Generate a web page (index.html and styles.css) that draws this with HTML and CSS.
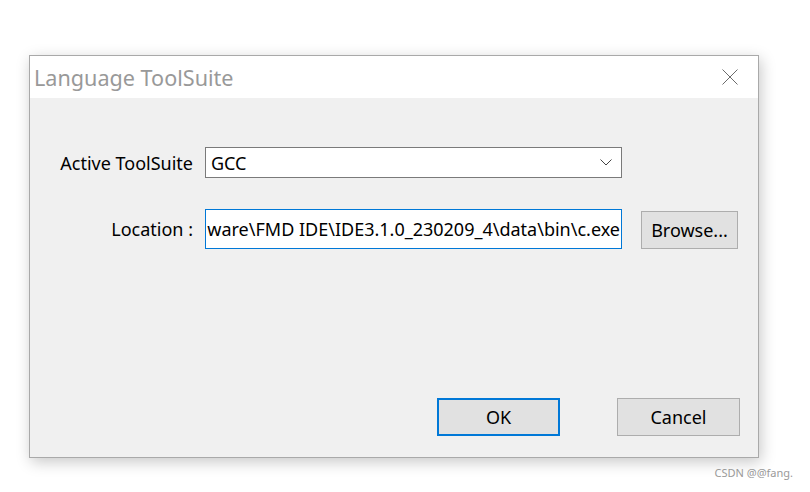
FILE: index.html
```html
<!DOCTYPE html>
<html lang="en">
<head>
    <meta charset="UTF-8">
    <meta name="viewport" content="width=device-width, initial-scale=1.0">
    <title>Language ToolSuite</title>
    <link rel="stylesheet" href="styles.css">
</head>
<body>
    <div class="page">
        <div class="dialog">
            <div class="titlebar">
                <span class="title">Language ToolSuite</span>
                <button class="close" title="Close">
                    <svg width="16" height="16" viewBox="0 0 16 16">
                        <path d="M0.5 0.5 L15.5 15.5 M15.5 0.5 L0.5 15.5" stroke="#6b6b6b" stroke-width="1" fill="none"/>
                    </svg>
                </button>
            </div>

            <div class="content">
                <div class="form">
                    <label class="label">Active ToolSuite</label>
                    <div class="combo">
                        <span>GCC</span>
                        <svg width="12" height="7" viewBox="0 0 12 7">
                            <path d="M0.5 0.5 L6 6 L11.5 0.5" stroke="#444" stroke-width="1" fill="none"/>
                        </svg>
                    </div>
                    <span></span>

                    <label class="label">Location :</label>
                    <div class="field">
                        <span>ware\FMD IDE\IDE3.1.0_230209_4\data\bin\c.exe</span>
                    </div>
                    <button class="btn browse">Browse...</button>
                </div>

                <div class="footer">
                    <button class="btn default">OK</button>
                    <button class="btn">Cancel</button>
                </div>
            </div>
        </div>
        <div class="mark">CSDN @@fang.</div>
    </div>
</body>
</html>
```

FILE: styles.css
```css
* {
    margin: 0;
    padding: 0;
    box-sizing: border-box;
}
body {
    background: #ffffff;
    font-family: "Noto Sans", "Open Sans", sans-serif;
    color: #000;
}
.page {
    padding: 55px 0 0 29px;
}
.dialog {
    width: 730px;
    height: 403px;
    border: 1px solid #a9a9a9;
    background: #f0f0f0;
    display: flex;
    flex-direction: column;
    box-shadow: 2px 4px 14px rgba(0, 0, 0, 0.22);
}
.titlebar {
    height: 42px;
    background: #ffffff;
    display: flex;
    align-items: center;
    justify-content: space-between;
    padding: 0 20px 0 4px;
}
.title {
    font-size: 21.6px;
    color: #999999;
}
.close {
    border: none;
    background: none;
    width: 16px;
    height: 16px;
    display: flex;
}
.content {
    flex: 1;
    display: flex;
    flex-direction: column;
    padding: 49px 18px 21px 0;
}
.form {
    display: grid;
    grid-template-columns: 163px 417px 97px;
    column-gap: 12px;
    row-gap: 30px;
    align-items: center;
}
.form .browse {
    margin-left: 7px;
    align-self: start;
    margin-top: 3px;
}
.label {
    text-align: right;
    font-size: 18px;
    padding-top: 1px;
}
.combo {
    height: 31px;
    border: 1px solid #7a7a7a;
    background: #fff;
    display: flex;
    align-items: center;
    justify-content: space-between;
    padding: 0 9px 0 5px;
    font-size: 18px;
}
.field {
    height: 40px;
    border: 1px solid #0078d7;
    background: #fff;
    display: flex;
    align-items: center;
    justify-content: flex-end;
    overflow: hidden;
    white-space: nowrap;
    padding-right: 1px;
    font-size: 18px;
}
.btn {
    font-family: "Noto Sans", "Open Sans", sans-serif;
    font-size: 18px;
    color: #000;
    background: #e1e1e1;
    border: 1px solid #adadad;
    height: 38px;
    width: 123px;
}
.btn.browse {
    width: 97px;
}
.btn.default {
    border: 2px solid #0078d7;
}
.footer {
    margin-top: auto;
    display: flex;
    justify-content: flex-end;
    gap: 57px;
}
.mark {
    text-align: right;
    padding: 7px 17px 0 0;
    font-size: 11px;
    color: #999;
}
```
